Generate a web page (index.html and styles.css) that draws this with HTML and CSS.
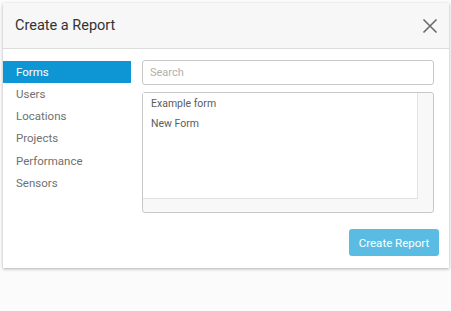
FILE: index.html
```html
<!DOCTYPE html>
<html lang="en">
<head>
  <meta charset="UTF-8" />
  <title>Create a Report</title>
  <link rel="stylesheet" href="styles.css">
</head>
<body>
  <div class="dialog">
    <div class="dialog-header">
      <h2>Create a Report</h2>
      <button class="close-btn" aria-label="Close">
        <svg width="16" height="16" viewBox="0 0 16 16">
          <path d="M1.5 1.5 L14.5 14.5 M14.5 1.5 L1.5 14.5" stroke="#6b6b6b" stroke-width="1.6" fill="none"/>
        </svg>
      </button>
    </div>

    <div class="dialog-body">
      <ul class="sidebar">
        <li class="active">Forms</li>
        <li>Users</li>
        <li>Locations</li>
        <li>Projects</li>
        <li>Performance</li>
        <li>Sensors</li>
      </ul>

      <div class="main">
        <input class="search" type="text" placeholder="Search">
        <div class="list-box">
          <div class="list-items">
            <div class="list-item">Example form</div>
            <div class="list-item">New Form</div>
          </div>
        </div>
      </div>
    </div>

    <div class="dialog-footer">
      <button class="create-btn">Create Report</button>
    </div>
  </div>
</body>
</html>
```

FILE: styles.css
```css
* {
  margin: 0;
  padding: 0;
  box-sizing: border-box;
}

body {
  font-family: Roboto, 'Liberation Sans', sans-serif;
  background: #fbfbfb;
  min-height: 100vh;
  color: #666;
}

.dialog {
  margin: 3px 0 0 3px;
  width: 446px;
  background: #fff;
  box-shadow: 0 1px 3px rgba(0,0,0,0.3);
}

.dialog-header {
  height: 46px;
  display: flex;
  align-items: center;
  justify-content: space-between;
  padding: 0 11px 0 12px;
  background: #f7f7f7;
  border-bottom: 1px solid #dcdcdc;
}

.dialog-header h2 {
  font-size: 14.5px;
  font-weight: 400;
  color: #333;
}

.close-btn {
  background: none;
  border: none;
  width: 16px;
  height: 16px;
  display: flex;
  cursor: pointer;
}

.dialog-body {
  display: flex;
  gap: 11px;
  padding: 12px 15px 0 0;
}

.sidebar {
  list-style: none;
  width: 128px;
}

.sidebar li {
  height: 22px;
  line-height: 22px;
  padding-left: 13px;
  font-size: 11.5px;
  color: #707070;
}

.sidebar li:nth-child(n+4) {
  height: 22.5px;
  line-height: 22.5px;
}

.sidebar li.active {
  background: #0d96d3;
  color: #fff;
}

.main {
  flex: 1;
  display: flex;
  flex-direction: column;
  gap: 7px;
  margin-top: -1px;
}

.search {
  height: 25px;
  border: 1px solid #c8c8c8;
  border-radius: 3px;
  padding: 0 7px;
  font-family: inherit;
  font-size: 11px;
  outline: none;
}

.search::placeholder {
  color: #b0b0b0;
}

.list-box {
  height: 121px;
  border: 1px solid #c8c8c8;
  border-radius: 3px;
  background: #f8f8f8;
  padding: 0 15px 13px 0;
}

.list-items {
  height: 100%;
  background: #fff;
  border-right: 1px solid #e2e2e2;
  border-bottom: 1px solid #e2e2e2;
  padding-top: 1px;
}

.list-item {
  height: 20px;
  line-height: 20px;
  padding-left: 8px;
  font-size: 10.5px;
  color: #5c5c5c;
}

.dialog-footer {
  display: flex;
  justify-content: flex-end;
  padding: 16px 10px 12px;
}

.create-btn {
  width: 90px;
  height: 27px;
  background: #5bbce3;
  color: #fff;
  border: none;
  border-radius: 3px;
  font-family: inherit;
  font-size: 11.5px;
  cursor: pointer;
}
```
